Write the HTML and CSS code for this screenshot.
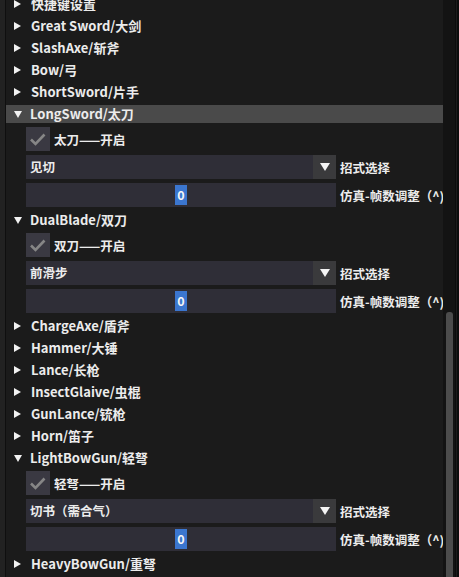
FILE: index.html
```html
<!DOCTYPE html>
<html>
<head>
<meta charset="utf-8">
<link rel="stylesheet" href="styles.css">
</head>
<body>
<div class="app">
  <div class="lstrip"></div>
  <div class="content">
    <div class="list">
      <div class="node"><span class="arr-r"></span><span class="txt">快捷键设置</span></div>
      <div class="node"><span class="arr-r"></span><span class="txt">Great Sword/大剑</span></div>
      <div class="node"><span class="arr-r"></span><span class="txt">SlashAxe/斩斧</span></div>
      <div class="node"><span class="arr-r"></span><span class="txt">Bow/弓</span></div>
      <div class="node"><span class="arr-r"></span><span class="txt">ShortSword/片手</span></div>
      <div class="node hover"><span class="arr-d"></span><span class="txt">LongSword/太刀</span></div>
      <div class="child">
        <div class="check-row"><span class="cbox"><svg width="24" height="24" viewBox="0 0 24 24"><polyline points="5,12.5 9.5,17 18.5,7.5" fill="none" stroke="#868686" stroke-width="2.6"/></svg></span><span class="lbl">太刀——开启</span></div>
        <div class="frame-row"><div class="combo"><span class="cval">见切</span><span class="cbtn"><span class="tri"></span></span></div><span class="lbl">招式选择</span></div>
        <div class="frame-row"><div class="slider"><span class="grab" style="left:149px"></span><span class="sval">0</span></div><span class="lbl">仿真-帧数调整（^)</span></div>
      </div>
      <div class="node"><span class="arr-d"></span><span class="txt">DualBlade/双刀</span></div>
      <div class="child">
        <div class="check-row"><span class="cbox"><svg width="24" height="24" viewBox="0 0 24 24"><polyline points="5,12.5 9.5,17 18.5,7.5" fill="none" stroke="#868686" stroke-width="2.6"/></svg></span><span class="lbl">双刀——开启</span></div>
        <div class="frame-row"><div class="combo"><span class="cval">前滑步</span><span class="cbtn"><span class="tri"></span></span></div><span class="lbl">招式选择</span></div>
        <div class="frame-row"><div class="slider"><span class="grab" style="left:149px"></span><span class="sval">0</span></div><span class="lbl">仿真-帧数调整（^)</span></div>
      </div>
      <div class="node"><span class="arr-r"></span><span class="txt">ChargeAxe/盾斧</span></div>
      <div class="node"><span class="arr-r"></span><span class="txt">Hammer/大锤</span></div>
      <div class="node"><span class="arr-r"></span><span class="txt">Lance/长枪</span></div>
      <div class="node"><span class="arr-r"></span><span class="txt">InsectGlaive/虫棍</span></div>
      <div class="node"><span class="arr-r"></span><span class="txt">GunLance/铳枪</span></div>
      <div class="node"><span class="arr-r"></span><span class="txt">Horn/笛子</span></div>
      <div class="node"><span class="arr-d"></span><span class="txt">LightBowGun/轻弩</span></div>
      <div class="child">
        <div class="check-row"><span class="cbox"><svg width="24" height="24" viewBox="0 0 24 24"><polyline points="5,12.5 9.5,17 18.5,7.5" fill="none" stroke="#868686" stroke-width="2.6"/></svg></span><span class="lbl">轻弩——开启</span></div>
        <div class="frame-row"><div class="combo"><span class="cval">切书（需合气）</span><span class="cbtn"><span class="tri"></span></span></div><span class="lbl">招式选择</span></div>
        <div class="frame-row"><div class="slider"><span class="grab" style="left:149px"></span><span class="sval">0</span></div><span class="lbl">仿真-帧数调整（^)</span></div>
      </div>
      <div class="node"><span class="arr-r"></span><span class="txt">HeavyBowGun/重弩</span></div>
    </div>
  </div>
  <div class="sb"><div class="thumb"></div></div>
  <div class="edge"></div>
</div>
</body>
</html>
```
FILE: styles.css
```css
html, body {
  margin: 0;
  padding: 0;
  width: 459px;
  height: 577px;
  overflow: hidden;
  background: #1b1b1b;
}
.app {
  display: flex;
  width: 459px;
  height: 577px;
  font-family: "Noto Sans CJK SC", "Noto Sans", sans-serif;
  font-size: 12.5px;
  font-weight: 700;
  color: #ececec;
}
.lstrip {
  width: 5px;
  flex: none;
  background: #222222;
  border-right: 1px solid #0f0f0f;
}
.content {
  flex: 1;
  min-width: 0;
  overflow: hidden;
  background: #1b1b1b;
}
.list {
  display: flex;
  flex-direction: column;
  gap: 4px;
  margin-top: -5px;
}
.node {
  height: 18px;
  display: flex;
  align-items: center;
  padding-left: 8px;
  white-space: nowrap;
}
.node.hover {
  background: #4a4a4a;
}
.arr-r {
  width: 0;
  height: 0;
  border-top: 4px solid transparent;
  border-bottom: 4px solid transparent;
  border-left: 7px solid #f2f2f2;
  margin-right: 10px;
}
.arr-d {
  width: 0;
  height: 0;
  border-left: 4.5px solid transparent;
  border-right: 4.5px solid transparent;
  border-top: 7px solid #f2f2f2;
  margin-right: 8px;
}
.txt {
  line-height: 18px;
  font-size: 13px;
}
.child {
  display: flex;
  flex-direction: column;
  gap: 4px;
  padding-left: 20px;
}
.check-row, .frame-row {
  height: 24px;
  display: flex;
  align-items: center;
  white-space: nowrap;
}
.cbox {
  width: 24px;
  height: 24px;
  background: #3a3942;
  flex: none;
  display: block;
}
.cbox svg { display: block; }
.lbl {
  margin-left: 4px;
  white-space: nowrap;
}
.combo {
  width: 310px;
  height: 24px;
  flex: none;
  display: flex;
  background: #2f2e37;
}
.cval {
  flex: 1;
  padding-left: 4px;
  line-height: 24px;
}
.cbtn {
  width: 23px;
  height: 24px;
  background: #3a3a3c;
  display: flex;
  align-items: center;
  justify-content: center;
}
.tri {
  width: 0;
  height: 0;
  border-left: 5.5px solid transparent;
  border-right: 5.5px solid transparent;
  border-top: 8px solid #f4f4f4;
}
.slider {
  position: relative;
  width: 310px;
  height: 24px;
  flex: none;
  background: #2f2e37;
  display: flex;
  align-items: center;
  justify-content: center;
}
.grab {
  position: absolute;
  top: 2px;
  bottom: 2px;
  width: 12px;
  background: #3b76cf;
}
.sval {
  position: relative;
  line-height: 24px;
  color: #f6f6f6;
}
.sb {
  width: 12px;
  flex: none;
  background: #131313;
  padding-top: 312px;
  box-sizing: border-box;
}
.thumb {
  margin-left: 3px;
  width: 7px;
  height: 300px;
  background: #4c4c4c;
  border-radius: 3px;
}
.edge {
  width: 4px;
  flex: none;
  background: #0c0c0c;
  box-shadow: inset -2px 0 0 #0c0c0c, inset -3px 0 0 #1c1c1c;
}
```
